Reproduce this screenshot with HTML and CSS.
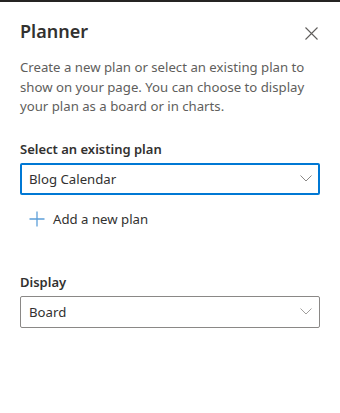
FILE: index.html
```html
<!DOCTYPE html>
<html>
<head>
<meta charset="utf-8">
<link rel="stylesheet" href="styles.css">
</head>
<body>
<div class="panel">
  <div class="header">
    <h1 class="title">Planner</h1>
    <button class="close" aria-label="Close">
      <svg width="13" height="13" viewBox="0 0 13 13"><path d="M0.5 0.5 L12.5 12.5 M12.5 0.5 L0.5 12.5" stroke="#605e5c" stroke-width="1.1" fill="none"/></svg>
    </button>
  </div>
  <p class="desc">Create a new plan or select an existing plan to show on your page. You can choose to display your plan as a board or in charts.</p>
  <div class="field">
    <div class="label">Select an existing plan</div>
    <div class="dropdown focused">
      <span class="value">Blog Calendar</span>
      <svg class="chev" width="12" height="7" viewBox="0 0 12 7"><path d="M0.5 0.5 L6 6 L11.5 0.5" stroke="#8a8886" stroke-width="1" fill="none"/></svg>
    </div>
  </div>
  <div class="add">
    <svg width="16" height="16" viewBox="0 0 16 16"><path d="M8 0.5 V15.5 M0.5 8 H15.5" stroke="#5c9fd9" stroke-width="1.3" fill="none"/></svg>
    <span>Add a new plan</span>
  </div>
  <div class="field display">
    <div class="label">Display</div>
    <div class="dropdown">
      <span class="value">Board</span>
      <svg class="chev" width="12" height="7" viewBox="0 0 12 7"><path d="M0.5 0.5 L6 6 L11.5 0.5" stroke="#a19f9d" stroke-width="1" fill="none"/></svg>
    </div>
  </div>
</div>
</body>
</html>
```
FILE: styles.css
```css
html, body {
  margin: 0;
  padding: 0;
  background: #ffffff;
}
body {
  font-family: "Noto Sans", "Open Sans", sans-serif;
  color: #323130;
  border-top: 2px solid #252423;
}
.panel {
  padding: 15px 20px 0;
}
.header {
  display: flex;
  justify-content: space-between;
  align-items: flex-start;
}
.title {
  margin: 0;
  font-size: 18px;
  font-weight: 600;
  line-height: 28px;
  color: #323130;
}
.close {
  border: 0;
  background: none;
  padding: 0;
  margin: 10px 2px 0 0;
  width: 13px;
  height: 13px;
  display: flex;
}
.desc {
  margin: 13px 0 0;
  font-size: 13.2px;
  line-height: 19.5px;
  color: #605e5c;
}
.field {
  margin-top: 22px;
}
.label {
  font-size: 13px;
  font-weight: 600;
  line-height: 20px;
  color: #323130;
}
.dropdown {
  margin-top: 4px;
  height: 32px;
  box-sizing: border-box;
  border: 1px solid #8a8886;
  border-radius: 2px;
  display: flex;
  align-items: center;
  justify-content: space-between;
  padding: 0 7px 0 8px;
}
.dropdown.focused {
  border: 2px solid #0078d4;
  padding: 0 6px 0 7px;
}
.value {
  font-size: 13.2px;
  color: #323130;
}
.add {
  display: flex;
  align-items: center;
  gap: 8px;
  height: 20px;
  margin-top: 14px;
  padding-left: 9px;
  font-size: 13.2px;
  line-height: 20px;
  color: #323130;
}
.display {
  margin-top: 43px;
}
```
